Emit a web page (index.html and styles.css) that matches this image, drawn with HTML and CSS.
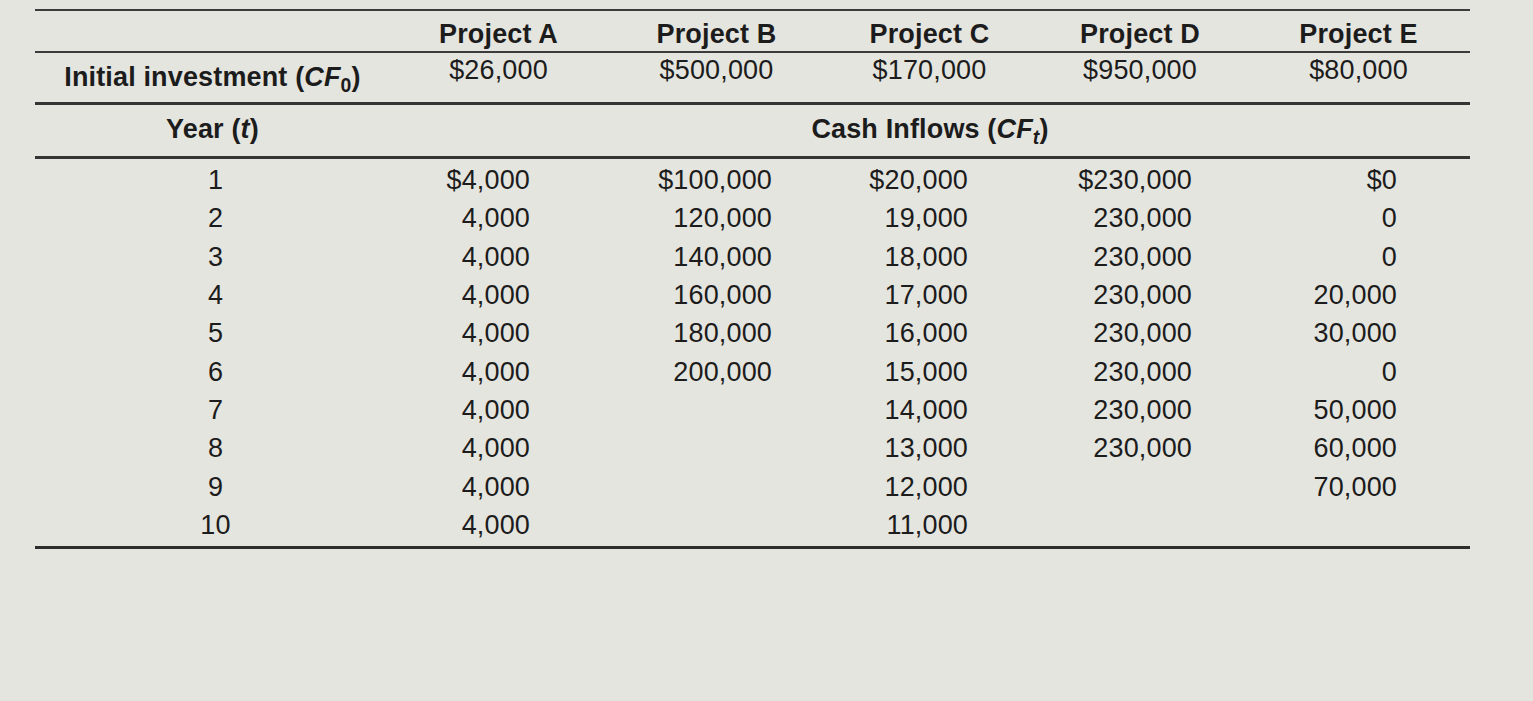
FILE: index.html
```
<!DOCTYPE html>
<html>
<head>
<meta charset="utf-8">
<link rel="stylesheet" href="styles.css">
</head>
<body>
<div class="sheet">
<table class="cf">
  <colgroup>
    <col class="c-label"><col class="c-a"><col class="c-b"><col class="c-c"><col class="c-d"><col class="c-e">
  </colgroup>
  <tr class="r-head">
    <td></td>
    <th>Project A</th><th>Project B</th><th>Project C</th><th>Project D</th><th>Project E</th>
  </tr>
  <tr class="r-inv">
    <th class="lbl">Initial investment (<i>CF</i><sub>0</sub>)</th>
    <td>$26,000</td><td>$500,000</td><td>$170,000</td><td>$950,000</td><td>$80,000</td>
  </tr>
  <tr class="r-year">
    <th class="lbl">Year (<i>t</i>)</th>
    <th colspan="5" class="span">Cash Inflows (<i>CF<sub>t</sub></i>)</th>
  </tr>
  <tr class="r-data first"><td class="yr">1</td><td>$4,000</td><td>$100,000</td><td>$20,000</td><td>$230,000</td><td>$0</td></tr>
  <tr class="r-data"><td class="yr">2</td><td>4,000</td><td>120,000</td><td>19,000</td><td>230,000</td><td>0</td></tr>
  <tr class="r-data"><td class="yr">3</td><td>4,000</td><td>140,000</td><td>18,000</td><td>230,000</td><td>0</td></tr>
  <tr class="r-data"><td class="yr">4</td><td>4,000</td><td>160,000</td><td>17,000</td><td>230,000</td><td>20,000</td></tr>
  <tr class="r-data"><td class="yr">5</td><td>4,000</td><td>180,000</td><td>16,000</td><td>230,000</td><td>30,000</td></tr>
  <tr class="r-data"><td class="yr">6</td><td>4,000</td><td>200,000</td><td>15,000</td><td>230,000</td><td>0</td></tr>
  <tr class="r-data"><td class="yr">7</td><td>4,000</td><td></td><td>14,000</td><td>230,000</td><td>50,000</td></tr>
  <tr class="r-data"><td class="yr">8</td><td>4,000</td><td></td><td>13,000</td><td>230,000</td><td>60,000</td></tr>
  <tr class="r-data"><td class="yr">9</td><td>4,000</td><td></td><td>12,000</td><td></td><td>70,000</td></tr>
  <tr class="r-data last"><td class="yr">10</td><td>4,000</td><td></td><td>11,000</td><td></td><td></td></tr>
</table>
</div>
</body>
</html>
```
FILE: styles.css
```
html, body {
  margin: 0;
  background: #e5e5df;
}
body {
  font-family: "Liberation Sans", Arial, sans-serif;
  color: #1c1c1c;
}
.sheet {
  padding: 9px 0 0 35px;
}
.cf {
  border-collapse: collapse;
  table-layout: fixed;
  width: 1435px;
  font-size: 27px;
  letter-spacing: 0.15px;
  border-top: 2px solid #3c3c3c;
  border-bottom: 3px solid #2e2e2e;
}
.c-label { width: 355px; }
.c-a { width: 217px; }
.c-b { width: 219px; }
.c-c { width: 207px; }
.c-d { width: 214px; }
.c-e { width: 223px; }

.cf th, .cf td {
  padding: 0;
  line-height: 28px;
  vertical-align: middle;
}
.cf th {
  font-weight: bold;
  text-align: center;
}
.cf sub {
  font-size: 0.72em;
  line-height: 0;
  vertical-align: -0.3em;
}
.lbl sub { font-style: normal; }

.r-head th, .r-head td {
  height: 34px;
  padding-top: 6px;
}
.r-inv th, .r-inv td {
  border-top: 2px solid #3c3c3c;
  text-align: center;
}
.r-inv .lbl {
  padding-bottom: 2px;
  height: 47px;
}
.r-inv td {
  padding-bottom: 15px;
  height: 34px;
}
.r-year th {
  height: 48px;
  border-top: 3px solid #353535;
  padding-bottom: 3px;
}
.span {
  padding-right: 20px;
}

.r-data td {
  height: 38.3px;
  text-align: right;
}
.r-data.first td {
  border-top: 3px solid #353535;
  padding-top: 2px;
}
.r-data.last td {
  padding-bottom: 2px;
}
.r-data td.yr {
  text-align: center;
  padding-left: 6px;
}
.r-data td:nth-child(2) { padding-right: 77px; }
.r-data td:nth-child(3) { padding-right: 54px; }
.r-data td:nth-child(4) { padding-right: 65px; }
.r-data td:nth-child(5) { padding-right: 55px; }
.r-data td:nth-child(6) { padding-right: 73px; }
```
